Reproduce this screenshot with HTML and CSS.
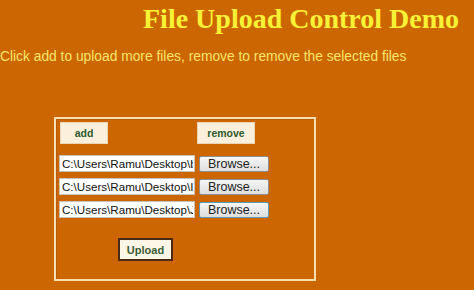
FILE: index.html
```html
<!DOCTYPE html>
<html>
<head>
	<meta charset="utf-8">
	<title>File Upload Control Demo</title>
	<link rel="stylesheet" href="styles.css">
</head>
<body>
	<h1 class="title">File Upload Control Demo</h1>
	<p class="hint">Click add to upload more files, remove to remove the selected files</p>
	<div class="panel">
		<div class="grid">
			<div class="cell"><button class="act add">add</button></div>
			<div class="cell"><button class="act">remove</button></div>
			<div class="row"><input class="path" type="text" value="C:\Users\Ramu\Desktop\banner.jpg"><button class="browse">Browse...</button></div>
			<div class="row"><input class="path" type="text" value="C:\Users\Ramu\Desktop\Images.zip"><button class="browse">Browse...</button></div>
			<div class="row"><input class="path" type="text" value="C:\Users\Ramu\Desktop\Jellyfish.jpg"><button class="browse focus">Browse...</button></div>
		</div>
		<button class="upload">Upload</button>
	</div>
</body>
</html>
```

FILE: styles.css
```css
*{margin: 0;padding: 0;box-sizing: border-box;}
body{background: #cc6600;font-family: "Liberation Sans", Arial, sans-serif;}
.title{font-family: "Liberation Serif", "Times New Roman", serif;font-size: 28px;font-weight: bold;color: #f8f236;line-height: 34px;padding-left: 143px;padding-top: 2px;}
.hint{font-size: 13.8px;color: #f6e56a;line-height: 20px;margin-top: 11px;}
.panel{margin: 50px 0 0 54px;width: 262px;height: 164px;border: 2px solid #f7dfae;box-shadow: inset 1px 1px 0 #b85a00;padding: 3px 4px 0 3px;}
.grid{display: grid;grid-template-columns: 138px 72px;}
.cell{height: 33px;}
.row{grid-column: 1 / 3;display: flex;gap: 4px;height: 23px;align-items: flex-start;}
.act{height: 22px;background: #fcefdb;border: 1px solid #ecd4b4;font-family: "Liberation Sans", Arial, sans-serif;font-size: 10.5px;font-weight: bold;color: #2d5a2d;width: 58px;}
.add{width: 48px;margin-left: 1px;}
.path{width: 136px;height: 17px;border: 1px solid #c9c2b8;background: #fff;font-family: "Liberation Sans", Arial, sans-serif;font-size: 11.6px;color: #111;padding: 0 1px 0 2px;outline: none;}
.browse{width: 70px;height: 16px;margin-top: 1px;border: 1px solid #8e8e8e;border-radius: 2px;background: linear-gradient(#f6f6f6, #dedede);font-family: "Liberation Sans", Arial, sans-serif;font-size: 12.5px;color: #222;line-height: 14px;}
.browse.focus{border-color: #5a9bb8;}
.upload{display: block;margin: 14px 0 0 59px;width: 55px;height: 23px;background: #fdf6e6;border: 2px solid #4a2a12;font-family: "Liberation Sans", Arial, sans-serif;font-size: 11px;font-weight: bold;color: #3b5b36;}
```
